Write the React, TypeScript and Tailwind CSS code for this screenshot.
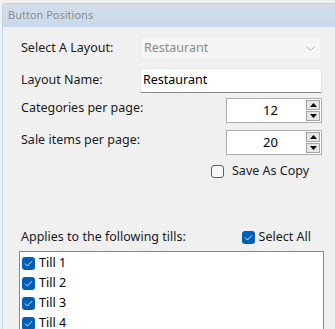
import React from 'react';

const font = { fontFamily: '"Noto Sans", "Segoe UI", Arial, sans-serif' };

const Check = ({ checked }: { checked: boolean }) =>
  checked ? (
    <span className="w-[13px] h-[13px] rounded-[3px] bg-[#005fb8] flex items-center justify-center shrink-0">
      <svg width="9" height="7" viewBox="0 0 9 7">
        <path d="M1 3.6 L3.4 6 L8 1.2" stroke="#dbe8f6" strokeWidth="1" fill="none" />
      </svg>
    </span>
  ) : (
    <span className="w-[13px] h-[13px] rounded-[3px] border border-[#5d5d5d] bg-[#f7f7f7] shrink-0" />
  );

const Spinner = ({ value }: { value: number }) => (
  <div className="w-[96px] h-[25px] border border-[#adadad] bg-white flex items-center">
    <span className="flex-1 text-center text-[13px] text-black pl-[8px]">{value}</span>
    <div className="flex flex-col gap-[1px] mr-[1px]">
      <span className="w-[14px] h-[10px] border border-[#a3a3a3] bg-[#e6e6e6] flex items-center justify-center">
        <svg width="7" height="4" viewBox="0 0 7 4"><path d="M0 4 L3.5 0 L7 4 Z" fill="#000" /></svg>
      </span>
      <span className="w-[14px] h-[10px] border border-[#a3a3a3] bg-[#e6e6e6] flex items-center justify-center">
        <svg width="7" height="4" viewBox="0 0 7 4"><path d="M0 0 L3.5 4 L7 0 Z" fill="#000" /></svg>
      </span>
    </div>
  </div>
);

export default function App() {
  const tills = ['Till 1', 'Till 2', 'Till 3', 'Till 4'];
  return (
    <div className="w-[335px] h-[329px] bg-[#f0f0f0] overflow-hidden pt-[3px] pl-[2px]" style={font}>
      <div className="h-[400px] border-l border-t border-[#c3d2e3] rounded-tl-[4px] bg-[#f0f0f0]">
        {/* header */}
        <div className="h-[23px] bg-gradient-to-b from-[#d4dee9] to-[#c8d9ec] flex items-center pl-[5px] text-[11px] text-[#8d8d8d] rounded-tl-[3px]">
          Button Positions
        </div>

        <div className="pl-[18px] pr-[13px] text-[12.5px] text-[#1a1a1a]">
          <div className="flex items-center justify-between mt-[9px] h-[24px]">
            <span>Select A Layout:</span>
            <div className="w-[182px] h-[24px] border border-[#e8e8e8] bg-[#f5f5f5] flex items-center justify-between pl-[3px] pr-[6px] text-[#8a8a8a]">
              <span>Restaurant</span>
              <svg width="9" height="5" viewBox="0 0 9 5"><path d="M0.5 0.5 L4.5 4.5 L8.5 0.5" stroke="#b5b5b5" fill="none" /></svg>
            </div>
          </div>

          <div className="flex items-center justify-between mt-[8px] h-[24px]">
            <span>Layout Name:</span>
            <div className="w-[182px] h-[25px] border border-[#e5e5e5] border-b-[#8a8a8a] bg-white flex items-center pl-[2px] text-black">
              Restaurant
            </div>
          </div>

          <div className="flex items-center justify-between mt-[6px]">
            <span className="-mt-[4px]">Categories per page:</span>
            <Spinner value={12} />
          </div>

          <div className="flex items-center justify-between mt-[7px]">
            <span className="-mt-[4px]">Sale items per page:</span>
            <Spinner value={20} />
          </div>

          <div className="flex items-center mt-[7px] ml-[190px] gap-[8px]">
            <Check checked={false} />
            <span>Save As Copy</span>
          </div>

          <div className="flex items-center justify-between mt-[49px] h-[16px]">
            <span className="-mt-[1px]">Applies to the following tills:</span>
            <div className="flex items-center gap-[4px] mr-[11px]">
              <Check checked={true} />
              <span>Select All</span>
            </div>
          </div>

          <div className="mt-[5px] -ml-[2px] w-[305px] h-[120px] border border-[#828790] bg-white pt-[2px] pl-[2px]">
            {tills.map((t) => (
              <div key={t} className="flex items-center gap-[4px] h-[20px]">
                <Check checked={true} />
                <span className="text-black">{t}</span>
              </div>
            ))}
          </div>
        </div>
      </div>
    </div>
  );
}
